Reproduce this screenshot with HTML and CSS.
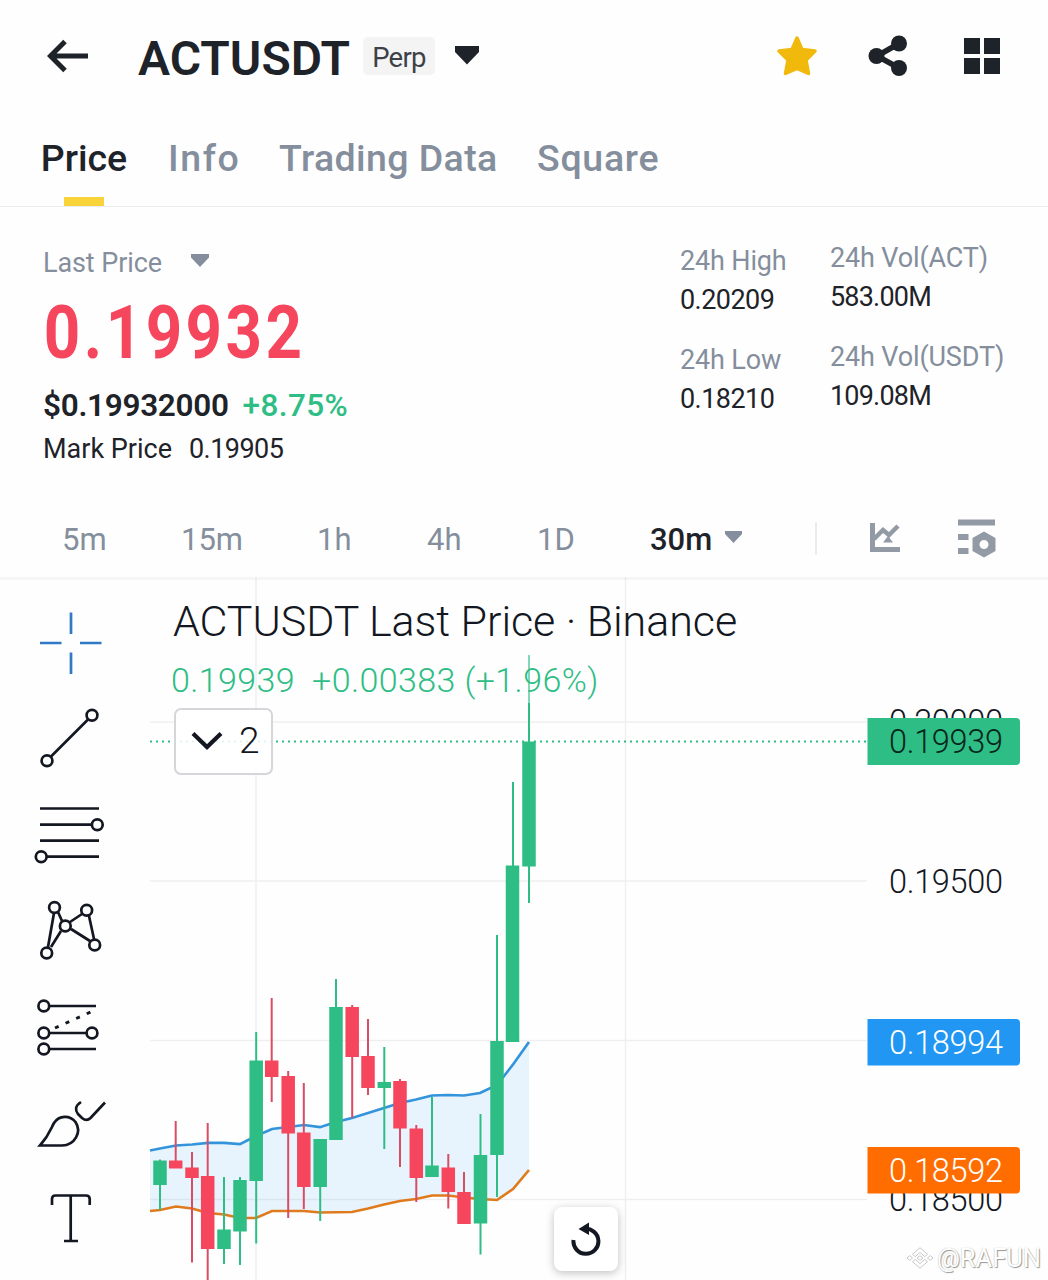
FILE: index.html
```html
<!DOCTYPE html>
<html lang="en">
<head>
<meta charset="utf-8">
<title>ACTUSDT Perp</title>
<link rel="stylesheet" href="styles.css">
</head>
<body>
<div class="app">
  <header class="topbar">
    <svg class="back" width="42" height="34" viewBox="47 39 42 34"><path d="M88 56H52M65 41.500L50.500 56L65 70.500" fill="none" stroke="#1e2329" stroke-width="5"/></svg>
    <h1 class="symbol">ACTUSDT</h1>
    <span class="badge">Perp</span>
    <svg class="pick" width="26" height="20" viewBox="0 0 26 20"><path d="M1 1H25V7L13 19.500L1 7Z" fill="#1e2329"/></svg>
    <div class="actions">
      <svg width="42" height="42" viewBox="0 0 42 42"><path d="M21 3L26 14.500L39 16L30 25L32.500 38.500L21 33.500L9.500 38.500L12 25L3 16L16 14.500Z" fill="#f0b90b" stroke="#f0b90b" stroke-width="3.500" stroke-linejoin="round"/></svg>
      <svg width="40" height="42" viewBox="0 0 40 42"><path d="M31 8.500L9 21L31 33" fill="none" stroke="#1e2329" stroke-width="5.500"/><g fill="#1e2329"><circle cx="31" cy="8.500" r="8"/><circle cx="8.500" cy="21" r="8"/><circle cx="31" cy="33" r="8"/></g></svg>
      <svg width="36" height="36" viewBox="0 0 36 36"><path d="M0 0H16V16H0ZM20 0H36V16H20ZM0 20H16V36H0ZM20 20H36V36H20Z" fill="#1e2329"/></svg>
    </div>
  </header>

  <nav class="tabs">
    <span class="tab active">Price</span>
    <span class="tab info">Info</span>
    <span class="tab trading">Trading Data</span>
    <span class="tab square">Square</span>
  </nav>

  <section class="ticker">
    <div class="quote">
      <div class="kind">Last Price <svg width="18" height="13" viewBox="0 0 18 13"><path d="M0 0H18V3.500L9 13L0 3.500Z" fill="#848e9c"/></svg></div>
      <div class="last">0.19932</div>
      <div class="fiat"><span class="usd">$0.19932000</span><span class="up">+8.75%</span></div>
      <div class="mark"><span>Mark Price</span><span class="num">0.19905</span></div>
    </div>
    <dl class="stats range">
      <div><dt>24h High</dt><dd>0.20209</dd></div>
      <div><dt>24h Low</dt><dd>0.18210</dd></div>
    </dl>
    <dl class="stats volume">
      <div><dt>24h Vol(ACT)</dt><dd>583.00M</dd></div>
      <div><dt>24h Vol(USDT)</dt><dd>109.08M</dd></div>
    </dl>
  </section>

  <nav class="intervals">
    <span>5m</span><span>15m</span><span>1h</span><span>4h</span><span>1D</span>
    <span class="current">30m <svg width="17" height="12" viewBox="0 0 17 12"><path d="M0 0H17V3L8.500 12L0 3Z" fill="#848e9c"/></svg></span>
    <i class="divider"></i>
    <svg class="indicator" width="30" height="30" viewBox="869 522 30 30"><g fill="none" stroke="#929aa5" stroke-width="5"><path d="M871.500 522V548.500H899"/><path d="M873 538L882 529L888 534L897 525" stroke-width="4.500"/></g><path d="M887 535L892 541.500H882Z" fill="#929aa5"/></svg>
    <svg width="38" height="40" viewBox="958 518 38 40"><path d="M958 519.500H995V525.500H958ZM958 534H968.500V540H958ZM958 548H968.500V554H958Z" fill="#929aa5"/><path fill-rule="evenodd" d="M984 531.500L995.500 538V551L984 557.500L972.500 551V538ZM984 540A4.500 4.500 0 1 0 984 549A4.500 4.500 0 1 0 984 540Z" fill="#929aa5"/></svg>
  </nav>

  <main class="workspace">
    <aside class="tools">
      <svg viewBox="0 595 150 96"><path d="M71 612.500V634M71 652.500V674M40 643H61.500M80 643H101.500" stroke="#3179c5" stroke-width="2.700"/></svg>
      <svg viewBox="0 691 150 96"><path d="M51 756.500L88 719.500"/><circle cx="92" cy="715.300" r="5.400"/><circle cx="47" cy="760.700" r="5.400"/></svg>
      <svg viewBox="0 787 150 96"><path d="M40 808.500H99M40 824.700H91M40 840.700H99M47 856.700H99"/><circle cx="97.300" cy="824.700" r="5.400"/><circle cx="41.200" cy="856.700" r="5.400"/></svg>
      <svg viewBox="0 883 150 96"><path d="M54 913L48 947M58 912L62 921M70 922L82 914M89 916L94 939M71 929L90 941M61 931L51 947"/><circle cx="54.500" cy="907.500" r="5.400"/><circle cx="86.700" cy="910.300" r="5.400"/><circle cx="65.300" cy="926" r="5.400"/><circle cx="94.700" cy="945" r="5.400"/><circle cx="46.700" cy="953" r="5.400"/></svg>
      <svg viewBox="0 979 150 96"><path d="M50 1006H96M50 1033H86M50 1049H96"/><path d="M55 1028L94 1010.500" stroke-width="3" stroke-dasharray="4 7.600"/><circle cx="43.800" cy="1006" r="5.400"/><circle cx="43.800" cy="1033" r="5.400"/><circle cx="92" cy="1033" r="5.400"/><circle cx="43.800" cy="1049" r="5.400"/></svg>
      <svg viewBox="0 1075 150 96"><path d="M40 1145.500C50 1134 51 1128 54 1123C59 1115 70 1115 75.500 1122C82 1132 75 1145 62 1145.500ZM81 1102C75 1106 75 1110 78 1114L82 1118C85 1120.500 88 1120.500 90.500 1118L105 1102.500"/></svg>
      <svg viewBox="0 1171 150 96"><path d="M52 1205V1199Q52 1195.500 55.500 1195.500H86Q89.700 1195.500 89.700 1199V1205M70.700 1195.500V1241M64 1241H78"/></svg>
    </aside>

    <div class="chart">
      <svg class="plot" viewBox="150 580 898 700">
        <path class="band" d="M150 1150.500L160 1148.500L176 1145.500L192 1144.500L208 1142.800H224L240 1144.200L256 1136L272 1129L288 1127L304 1125L320 1127.200L336 1122L352 1118L368 1113L384 1108L400 1103L416 1099.500L432 1095.500L448 1095L464 1095.500L480 1093L497 1085L513 1064.500L529 1042V1170L513 1189L497 1200L480 1199L464 1197.500L448 1195.500H432L416 1199L400 1201L384 1204.500L368 1208.500L352 1212L320 1212.500L304 1211H272L256 1218H240L224 1214.500L208 1213L192 1208.500L176 1206.500L160 1210L150 1211Z"/>
        <path class="grid" d="M150 722H867M150 881H867M150 1040.500H867M150 1199.500H867M256 577V1280M625.500 577V1280"/>
        <path class="line upper" d="M150 1150.500L160 1148.500L176 1145.500L192 1144.500L208 1142.800H224L240 1144.200L256 1136L272 1129L288 1127L304 1125L320 1127.200L336 1122L352 1118L368 1113L384 1108L400 1103L416 1099.500L432 1095.500L448 1095L464 1095.500L480 1093L497 1085L513 1064.500L529 1042"/>
        <path class="line lower" d="M150 1211L160 1210L176 1206.500L192 1208.500L208 1213L224 1214.500L240 1218H256L272 1211H304L320 1212.500L352 1212L368 1208.500L384 1204.500L400 1201L416 1199L432 1195.500H448L464 1197.500L480 1199L497 1200L513 1189L529 1170"/>
        <g class="wicks">
          <path class="rise" d="M160 1159.500V1210M224 1177V1264M240 1177V1265M256.200 1032V1243.500M320.200 1139V1221M336 979V1140M384.300 1047V1149M432 1097V1177M480.500 1114V1254.500M497 935V1197M513 782V1042M529 703V903"/>
          <path class="rise faint" d="M529 655V703"/>
          <path class="fall" d="M175.700 1121V1168M192 1152V1262.500M207.700 1123V1280M271.700 998V1102M288.200 1071V1218M303.800 1083V1209M352.200 1005V1118M368 1019V1095M400 1079V1167M416.300 1125V1202M448.300 1154V1208.500M464 1172V1224"/>
        </g>
        <g class="bodies">
          <path class="rise" d="M160 1160.500V1185M224 1229.500V1249M240 1180V1231.500M256.200 1060.500V1181M320.200 1139V1187M336 1007V1140M384.300 1082V1088M432 1165.500V1177M480.500 1155V1223.500M497 1041V1155M512.500 865.500V1042M529 741.500V866.500"/>
          <path class="fall" d="M175.700 1160.500V1168.500M192 1167.500V1178M207.700 1176V1249M271.700 1060.500V1077M288.200 1076V1133.500M303.800 1132.500V1187M352.200 1007V1057M368 1056V1088M400 1081V1128.500M416.300 1128.500V1178M448.300 1167.500V1192M464 1192V1224"/>
        </g>
        <path class="lastline" d="M150 741.500H867"/>
        <g class="scale">
          <text x="889" y="733" textLength="114">0.20000</text>
          <text x="889" y="892.500" textLength="114">0.19500</text>
          <text x="889" y="1211" textLength="114">0.18500</text>
          <path d="M867.500 718H1016Q1020 718 1020 722V761Q1020 765 1016 765H867.500Z" fill="#2ebd85"/>
          <text x="889" y="753" textLength="114" class="dark">0.19939</text>
          <path d="M867.500 1019H1016Q1020 1019 1020 1023V1061.500Q1020 1065.500 1016 1065.500H867.500Z" fill="#2196f3"/>
          <text x="889" y="1054" textLength="114" class="light">0.18994</text>
          <path d="M867.500 1147H1016Q1020 1147 1020 1151V1189.500Q1020 1193.500 1016 1193.500H867.500Z" fill="#ff6d00"/>
          <text x="889" y="1182" textLength="114" class="light">0.18592</text>
        </g>
      </svg>

      <div class="legend">
        <div class="name">ACTUSDT Last Price · Binance</div>
        <div class="change"><span>0.19939</span><span>+0.00383 (+1.96%)</span></div>
        <button class="studies"><svg width="32" height="20" viewBox="0 0 32 20"><path d="M2 3.500L16 17L30 3.500" fill="none" stroke="#131722" stroke-width="4.200"/></svg>2</button>
      </div>

      <button class="reset"><svg width="30" height="34" viewBox="0 0 30 34"><path d="M2.500 18A12.500 12.500 0 1 0 13 7" fill="none" stroke="#131722" stroke-width="4"/><path d="M18 .500V13L7.500 7Z" fill="#131722"/></svg></button>

      <div class="watermark"><svg width="28" height="24" viewBox="0 0 30 24"><path d="M7 8L15 1L23 8L20 10.500L15 6L10 10.500ZM1 12L4 9.500L7 12L4 14.500ZM12 12L15 9.500L18 12L15 14.500ZM23 12L26 9.500L29 12L26 14.500ZM7 16L10 13.500L15 18L20 13.500L23 16L15 23Z" fill="#fff" stroke="#b5b5b5" stroke-width=".8"/></svg><span>@RAFUN</span></div>
    </div>
  </main>
</div>
</body>
</html>
```
FILE: styles.css
```css
* { box-sizing: border-box; }
body { margin: 0; background: #fefefe; font-family: Roboto, "Liberation Sans", sans-serif; color: #1e2329; }
svg { display: block; flex: none; }
button { font: inherit; color: inherit; padding: 0; }
.app { width: 1048px; height: 1280px; overflow: hidden; display: flex; flex-direction: column; }

.topbar { height: 112px; display: flex; align-items: center; padding: 0 48.500px 0 47px; }
.symbol { margin: 5px 0 0 49px; width: 225px; font-size: 48px; line-height: 60px; font-weight: 600; white-space: nowrap; }
.badge { width: 72px; height: 38px; border-radius: 5px; background: #f4f4f4; text-align: center; font-size: 27.500px; line-height: 41px; letter-spacing: -.7px; color: #3c4148; }
.pick { margin-left: 19px; margin-top: -2px; }
.actions { margin-left: auto; display: flex; align-items: center; }
.actions svg:nth-child(2) { margin-left: 50px; }
.actions svg:nth-child(3) { margin-left: 55.500px; }

.tabs { height: 95px; border-bottom: 1px solid #ebecee; display: flex; padding-left: 41px; gap: 41px; font-size: 37.500px; font-weight: 500; line-height: 92px; color: #848e9c; white-space: nowrap; }
.tab { width: 86px; }
.tab.active { color: #1e2329; display: flex; flex-direction: column; align-items: center; }
.tab.active::after { content: ""; width: 40px; height: 9px; margin-top: -7px; background: #f8d33a; }
.tab.info { width: 70px; letter-spacing: 1.600px; }
.tab.trading { width: 217px; letter-spacing: .4px; }
.tab.square { letter-spacing: .7px; }

.ticker { height: 293px; display: flex; padding: 36px 0 0 43px; }
.quote { width: 637px; }
.kind { height: 40px; display: flex; align-items: center; gap: 29px; font-size: 27px; line-height: 40px; letter-spacing: -.1px; color: #848e9c; }
.kind svg { margin-top: -5px; }
.last { font-size: 74px; line-height: 100px; font-weight: 700; letter-spacing: 4px; transform: scaleX(.86); transform-origin: left; padding-left: 1px; color: #f6465d; }
.fiat { display: flex; gap: 14px; font-size: 31.500px; line-height: 46px; font-weight: 600; letter-spacing: -.3px; }
.up { color: #2ebd85; font-weight: 500; letter-spacing: .4px; }
.mark { display: flex; gap: 17px; font-size: 27px; line-height: 40px; }
.num, .stats dd { letter-spacing: -.55px; }
.stats { margin: -1px 0 0; display: flex; flex-direction: column; gap: 21px; font-size: 27px; line-height: 39px; letter-spacing: -.15px; white-space: nowrap; }
.stats dt { color: #848e9c; }
.stats dd { margin: 0; }
.range { width: 150px; }
.volume { margin-top: -4px; }
.volume dd { letter-spacing: -.8px; }

.intervals { height: 80px; padding: 3px 52px 0 62px; border-bottom: 3px solid #f6f6f6; display: flex; align-items: center; font-size: 31px; line-height: 40px; color: #848e9c; }
.intervals span:nth-child(1) { width: 119px; }
.intervals span:nth-child(2) { width: 136px; }
.intervals span:nth-child(3) { width: 110px; }
.intervals span:nth-child(4) { width: 110px; }
.intervals span:nth-child(5) { width: 113px; }
.intervals .current { width: 165px; display: flex; align-items: center; gap: 13px; color: #1e2329; font-weight: 500; }
.current svg { margin-top: -6px; }
.divider { width: 2px; height: 33px; margin-top: -4px; background: #eaecef; }
.indicator { margin: -4px 58px 0 53px; }
.indicator + svg { margin-top: -4px; }

.workspace { height: 700px; display: flex; }
.tools { width: 150px; padding-top: 15px; }
.tools svg { width: 150px; height: 96px; fill: none; stroke: #131722; stroke-width: 2.700; }
.chart { position: relative; width: 898px; height: 700px; }
.plot { width: 898px; height: 700px; overflow: visible; }
.band { fill: #e8f4fd; }
.grid { fill: none; stroke: #000; stroke-opacity: .06; stroke-width: 1.500; }
.line { fill: none; stroke-width: 2.700; }
.upper { stroke: #3494db; }
.lower { stroke: #e07b1d; }
.wicks { stroke-width: 2; }
.bodies { stroke-width: 13.500; }
.rise { stroke: #2ebd85; }
.fall { stroke: #f6465d; }
.wicks .fall { stroke: #d84d64; }
.faint { stroke-opacity: .6; }
.lastline { stroke: #2ebd85; stroke-width: 2; stroke-dasharray: 2 4; }
.scale { font-size: 32.500px; font-weight: 300; fill: #131722; }
.scale .dark { fill: #06251a; }
.scale .light { fill: #fff; }

.legend { position: absolute; left: 21px; top: 15px; font-weight: 300; color: #131722; white-space: nowrap; }
.name { padding-left: 2px; font-size: 43px; line-height: 52px; letter-spacing: -.05px; }
.change { display: flex; gap: 17px; font-size: 34px; line-height: 66px; letter-spacing: .4px; color: #2ebd85; }
.studies { display: flex; align-items: center; gap: 16px; width: 99px; height: 67px; margin: -5px 0 0 3px; padding: 0 0 3px 15px; background: rgba(255,255,255,.85); border: 2px solid #d5d6da; border-radius: 7px; font-size: 37px; }
.reset { position: absolute; left: 404px; top: 627px; width: 64px; height: 64px; display: grid; place-items: center; border: 0; border-radius: 8px; background: #fff; box-shadow: 0 2px 8px rgba(0,0,0,.25); }
.watermark { position: absolute; right: 7px; bottom: 4px; display: flex; align-items: center; gap: 3px; font-size: 25.500px; line-height: 36px; color: #fff; text-shadow: 1px 1px 1px #999, 0 0 1px #aaa; }
```
